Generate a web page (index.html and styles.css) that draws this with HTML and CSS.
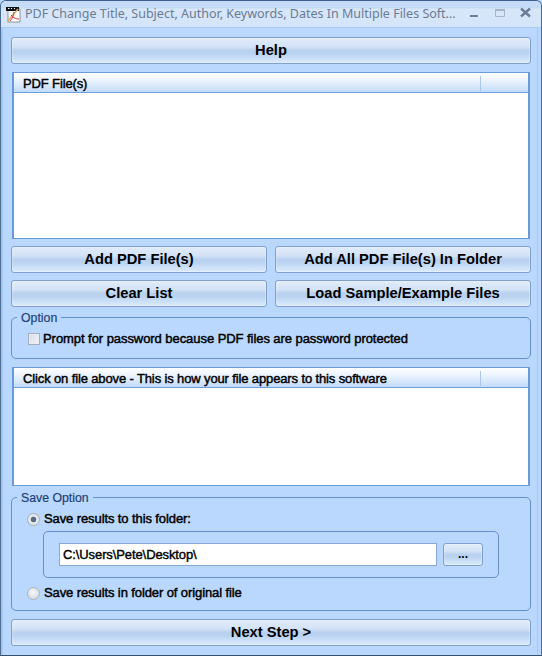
FILE: index.html
```html
<!DOCTYPE html>
<html lang="en">
<head>
<meta charset="utf-8">
<title>PDF Change Title, Subject, Author, Keywords, Dates In Multiple Files Software</title>
<link rel="stylesheet" href="styles.css">
</head>
<body>
<div class="window">
  <header class="titlebar">
    <svg class="app-icon" width="18" height="18" viewBox="0 0 18 18">
      <path d="M3 3h12v13H3z" fill="#fff" stroke="#555" stroke-width=".6"/>
      <path d="M1 1h13v4H1z" fill="#111"/>
      <path d="M3 2.500h1.500M6 2.500h1M9 2.500h1" stroke="#fff" stroke-width="1"/>
      <path d="M2 16 13 3" stroke="#d9b36a" stroke-width="1.500"/>
      <path d="M6 9c2 2 4 4 8 4M9 6c0 3-2 7-4 9" fill="none" stroke="#d22" stroke-width=".9"/>
    </svg>
    <span class="title-text">PDF Change Title, Subject, Author, Keywords, Dates In Multiple Files Soft...</span>
    <div class="caption">
      <svg width="12" height="10" viewBox="0 0 12 10"><path d="M1 7h8v2H1z" fill="#6f7f95"/></svg>
      <svg class="cap-max" width="12" height="10" viewBox="0 0 12 10"><path d="M1.500 1.500h9v7h-9z" fill="none" stroke="#a9b5c6"/><path d="M1 1h10v2H1z" fill="#a9b5c6"/></svg>
      <svg class="cap-close" width="13" height="11" viewBox="0 0 13 11"><path d="M2 1.500 11 9.500M11 1.500 2 9.500" stroke="#6b7d96" stroke-width="2.400"/></svg>
    </div>
  </header>
  <main class="client">
    <button class="btn btn-full">Help</button>
    <section class="list list-top">
      <div class="list-head"><span class="head-cell">PDF File(s)</span><span class="head-rest"></span></div>
    </section>
    <div class="btn-grid">
      <button class="btn">Add PDF File(s)</button>
      <button class="btn">Add All PDF File(s) In Folder</button>
      <button class="btn">Clear List</button>
      <button class="btn">Load Sample/Example Files</button>
    </div>
    <fieldset class="group group-option">
      <legend>Option</legend>
      <label class="check-row"><span class="checkbox"></span>Prompt for password because PDF files are password protected</label>
    </fieldset>
    <section class="list list-info">
      <div class="list-head"><span class="head-cell">Click on file above - This is how your file appears to this software</span><span class="head-rest"></span></div>
    </section>
    <fieldset class="group group-save">
      <legend>Save Option</legend>
      <label class="radio-row"><span class="radio on"></span>Save results to this folder:</label>
      <div class="folder-box">
        <input class="folder-input" type="text" value="C:\Users\Pete\Desktop\">
        <button class="btn btn-small">...</button>
      </div>
      <label class="radio-row radio-second"><span class="radio"></span>Save results in folder of original file</label>
    </fieldset>
    <button class="btn btn-full btn-next">Next Step &gt;</button>
  </main>
</div>
</body>
</html>
```
FILE: styles.css
```css
* { box-sizing: border-box; }
html, body { margin: 0; padding: 0; height: 100%; overflow: hidden; }
body { background: #bad7fd; font-family: "Liberation Sans", Arial, sans-serif; color: #000; }
.window {
  width: 542px; height: 656px; display: flex; flex-direction: column;
  background: #bad7fd;
  border: 1px solid #4c6c94; border-top-color: #3c5f8d; border-bottom-color: #33506f;
  border-radius: 6px 6px 0 0;
  overflow: hidden;
}
.titlebar {
  height: 27px; flex: none; display: flex; align-items: center; padding: 0 8px 0 4px;
  background: linear-gradient(#c6dcf6 0, #c6dcf6 7px, #d7e6f9 8px, #d5e5f9 100%);
  border-bottom: 1px solid #a9cbf1;
}
.app-icon { flex: none; margin-top: 1px; }
.title-text { margin-left: 2px; font: 12.500px/16px "Noto Sans", "Open Sans", sans-serif; color: #6a7b93; white-space: nowrap; flex: 1; margin-top: -1px; }
.caption { display: flex; align-items: center; gap: 13px; margin-top: -3px; padding-right: 1px; }
.client {
  flex: 1; display: flex; flex-direction: column;
  padding: 9px 9px 0 8px;
  border-left: 2px solid #a6c7ee;
  border-right: 1px solid #a6c7ee; margin-right: 3px;
}
.btn {
  display: block; height: 27px; padding: 0 0 1px; margin: 0;
  font: bold 14.700px/1 "Liberation Sans", Arial, sans-serif; color: #000;
  border: 1px solid #7f9fcf; border-radius: 3px;
  background: linear-gradient(#e2ecfa 0, #d3e2f6 35%, #b9d1ef 50%, #bad3f1 62%, #dcebfd 100%);
  box-shadow: inset 0 0 0 1px rgba(255,255,255,.25);
}
.btn-full { width: 520px; flex: none; }
.list { background: #fff; border: 1px solid #6a9ad8; border-right-width: 2px; border-left-width: 2px; width: 518px; margin-left: 1px; }
.list-top { height: 167px; margin-top: 8px; }
.list-info { height: 119px; margin-top: 8px; }
.list-head {
  height: 20px; display: flex; align-items: center;
  background: linear-gradient(#ffffff 0, #eef5fe 35%, #c2dbf9 100%);
  border-bottom: 1px solid #6f9fdc;
  font: 13px/16px "Liberation Sans", Arial, sans-serif;
  letter-spacing: -.13px;
  -webkit-text-stroke: .45px #000;
  color: #000;
}
.head-cell { flex: 1; padding-left: 9px; height: 15px; line-height: 15px; border-right: 1px solid #a9c6ec; margin-top: 1px; }
.head-rest { width: 47px; }
.btn-grid { display: grid; grid-template-columns: 256px 256px; gap: 7px 8px; margin-top: 7px; width: 520px; }
.group { margin: 0; padding: 0; border: 1px solid #6490d0; border-radius: 5px; width: 520px; min-width: 0; }
.group legend { margin-left: 5px; padding: 2px 4px 0 4px; font: 12.300px/14px "Liberation Sans", Arial, sans-serif; color: #1f3f79; -webkit-text-stroke: .2px #1f3f79; }
.group-option { height: 50px; margin-top: 2px; }
.group-save { height: 122px; margin-top: 3px; }
.check-row, .radio-row { display: flex; align-items: center; height: 16px; font: 13px/16px "Liberation Sans", Arial, sans-serif; color: #000; -webkit-text-stroke: .45px #000; }
.check-row { margin: 6px 0 0 15px; letter-spacing: -.06px; }
.radio-row { margin: 6px 0 0 15px; letter-spacing: -.1px; }
.checkbox { width: 12px; height: 12px; margin-right: 3px; margin-left: 1px; background: linear-gradient(135deg, #d5dbe4, #f3f6fa); border: 1px solid #a4adb9; box-shadow: inset 0 0 0 1px #e9edf2; }
.radio { width: 13px; height: 13px; margin-right: 4px; border-radius: 50%; border: 1px solid #a9b2be; background: radial-gradient(circle at 45% 40%, #f6f8fa, #cdd3db); }
.radio.on { background: radial-gradient(circle, #5d6b80 0, #5d6b80 2.500px, #e8ecf1 3.200px, #d3d9e0 100%); }
.folder-box { width: 456px; height: 47px; margin: 4px 0 0 31px; border: 1px solid #6490d0; border-radius: 5px; display: flex; align-items: center; padding-left: 15px; gap: 6px; }
.folder-input { width: 378px; height: 23px; border: 1px solid #88a8d8; background: #fff; padding: 0 3px; font: 13px/16px "Liberation Sans", Arial, sans-serif; -webkit-text-stroke: .4px #000; letter-spacing: -.1px; color: #000; outline: none; }
.btn-small { width: 40px; height: 23px; font-size: 12px; }
.radio-second { margin-top: 7px; }
.btn-next { margin-top: 8px; }
```
